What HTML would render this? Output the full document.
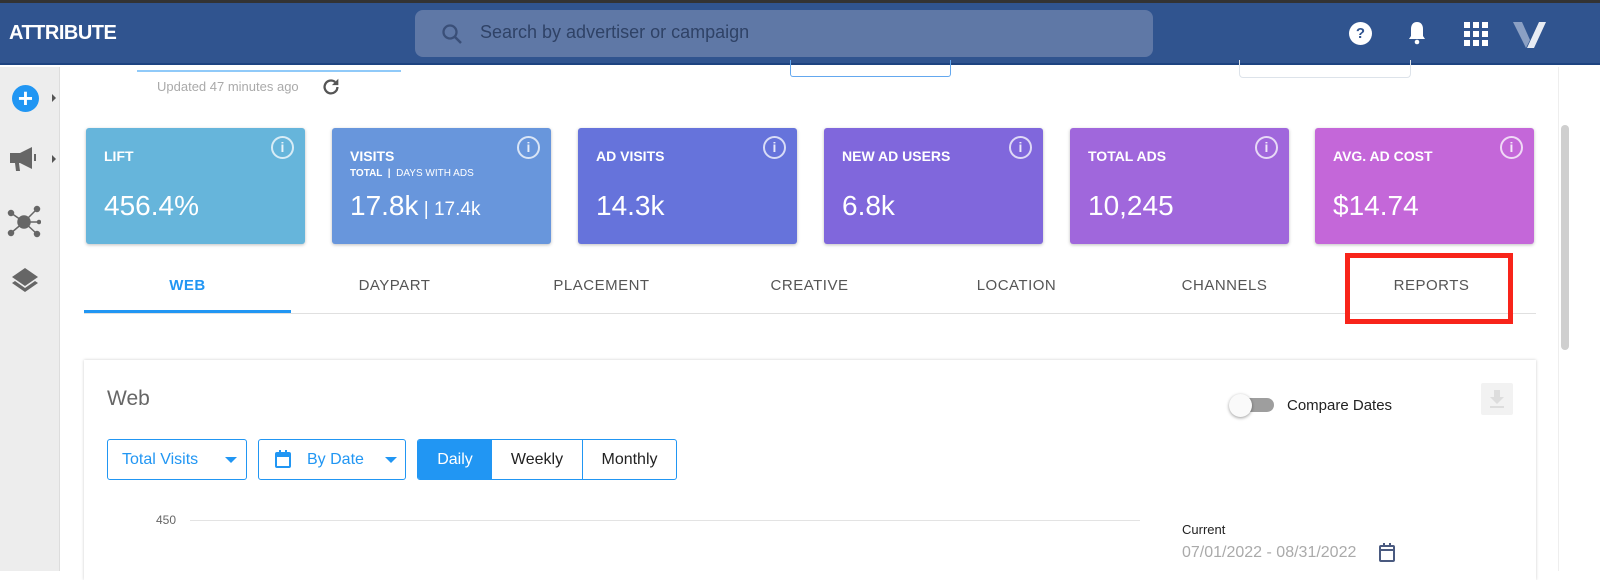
<!DOCTYPE html>
<html><head><style>
*{box-sizing:border-box;margin:0;padding:0}
body{width:1600px;height:571px;overflow:hidden;background:#fff;font-family:"Liberation Sans",sans-serif;position:relative}
.abs{position:absolute}
.card{position:absolute;top:128px;width:219px;height:116px;border-radius:3px;color:#fff;box-shadow:0 1px 3px rgba(0,0,0,.25)}
.card .t{position:absolute;left:18px;top:20px;font-size:14px;font-weight:bold}
.card .v{position:absolute;left:18px;top:62px;font-size:28px}
.card .i{position:absolute;right:11px;top:8px;width:23px;height:23px;border:2px solid rgba(255,255,255,.75);border-radius:50%;font-size:14px;text-align:center;line-height:19px;font-weight:bold;color:rgba(255,255,255,.85)}
.tab{position:absolute;top:277px;font-size:15px;color:#555;letter-spacing:.5px;text-align:center;width:207px}
.btn{position:absolute;top:439px;height:41px;border:1px solid #2196f3;border-radius:3px;font-size:16px;line-height:39px}
</style></head><body>
<div class="abs" style="left:0;top:0;width:1600px;height:3px;background:#333"></div>
<div class="abs" style="left:0;top:3px;width:1600px;height:62px;background:#30548f;border-bottom:2px solid #1d4380"></div>
<div class="abs" style="left:9px;top:22px;color:#fff;font-size:20px;font-weight:bold;letter-spacing:-.5px">ATTRIBUTE</div>
<div class="abs" style="left:415px;top:10px;width:738px;height:47px;background:#5f78a6;border-radius:8px"></div>
<svg class="abs" style="left:440px;top:22px" width="24" height="24" viewBox="0 0 24 24"><circle cx="10" cy="10" r="6.5" fill="none" stroke="#3a4f78" stroke-width="2.3"/><path d="M15 15l6 6" stroke="#3a4f78" stroke-width="2.5"/></svg>
<div class="abs" style="left:480px;top:22px;font-size:18px;color:#2f4266">Search by advertiser or campaign</div>
<div class="abs" style="left:1349px;top:22px;width:23px;height:23px;border-radius:50%;background:#fff;color:#30548f;font-weight:bold;font-size:15px;text-align:center;line-height:23px">?</div>
<svg class="abs" style="left:1407px;top:20px" width="20" height="26" viewBox="0 0 20 26"><path d="M10 2c-4 0-6 3-6 7v7l-2 3h16l-2-3V9c0-4-2-7-6-7z" fill="#fff"/><circle cx="10" cy="22" r="2.3" fill="#fff"/></svg>
<svg class="abs" style="left:1464px;top:22px" width="24" height="24" viewBox="0 0 24 24" fill="#fff"><rect x="0" y="0" width="6" height="6"/><rect x="9" y="0" width="6" height="6"/><rect x="18" y="0" width="6" height="6"/><rect x="0" y="9" width="6" height="6"/><rect x="9" y="9" width="6" height="6"/><rect x="18" y="9" width="6" height="6"/><rect x="0" y="18" width="6" height="6"/><rect x="9" y="18" width="6" height="6"/><rect x="18" y="18" width="6" height="6"/></svg>
<svg class="abs" style="left:1513px;top:20px" width="34" height="30" viewBox="0 0 34 30"><path d="M0 2h9l8 18-4 8z" fill="#8ba0c4"/><path d="M26 2h7l-12 26h-7z" fill="#e8ecf3"/></svg>
<!-- sidebar -->
<div class="abs" style="left:0;top:67px;width:60px;height:504px;background:#ededed;border-right:1px solid #ddd"></div>
<div class="abs" style="left:12px;top:85px;width:27px;height:27px;border-radius:50%;background:#2196f3;color:#fff;font-size:26px;font-weight:bold;text-align:center;line-height:26px">+</div>
<div class="abs" style="left:52px;top:94px;border-left:4px solid #555;border-top:4px solid transparent;border-bottom:4px solid transparent"></div>
<svg class="abs" style="left:10px;top:145px" width="32" height="32" viewBox="0 0 32 32"><rect x="0" y="8" width="10" height="10" fill="#666"/><path d="M10 8l12-6v22l-12-6z" fill="#666"/><rect x="24" y="9" width="2" height="7" fill="#666"/><path d="M5 18h4l1 8h-4z" fill="#666"/></svg>
<div class="abs" style="left:52px;top:155px;border-left:4px solid #555;border-top:4px solid transparent;border-bottom:4px solid transparent"></div>
<svg class="abs" style="left:7px;top:205px" width="34" height="34" viewBox="0 0 34 34" fill="#666" stroke="#666" stroke-width="1.5"><circle cx="17" cy="17" r="6"/><circle cx="4" cy="8" r="2.5"/><circle cx="30" cy="4" r="2.5"/><circle cx="32" cy="17" r="1.5"/><circle cx="4" cy="28" r="2.5"/><circle cx="30" cy="29" r="2.5"/><path d="M4 8L17 17L30 4M17 17L32 17M4 28L17 17L30 29" fill="none"/></svg>
<svg class="abs" style="left:10px;top:268px" width="30" height="32" viewBox="0 0 30 32" fill="#666"><path d="M15 0L28 9L15 18L2 9z"/><path d="M2 15l3-2 10 7 10-7 3 2-13 9z"/></svg>
<!-- top partials -->
<div class="abs" style="left:137px;top:70px;width:264px;height:2px;background:#90caf9"></div>
<div class="abs" style="left:157px;top:79px;font-size:13px;color:#aaa">Updated 47 minutes ago</div>
<svg class="abs" style="left:320px;top:76px" width="22" height="22" viewBox="0 0 24 24"><path d="M19 12a7 7 0 1 1-2.5-5.4" fill="none" stroke="#555" stroke-width="2.5"/><path d="M20 3v7h-7z" fill="#555"/></svg>
<div class="abs" style="left:790px;top:60px;width:161px;height:17px;border:1.5px solid #64a8ef;border-top:none;border-radius:0 0 3px 3px"></div>
<div class="abs" style="left:1239px;top:60px;width:172px;height:18px;border:1px solid #dde3ea;border-top:none;border-radius:0 0 4px 4px"></div>
<!-- cards -->
<div class="card" style="left:86px;background:#66b5db"><div class="t">LIFT</div><div class="v">456.4%</div><div class="i">i</div></div>
<div class="card" style="left:332px;background:#6896dc"><div class="t">VISITS</div><div class="abs" style="left:18px;top:40px;font-size:10px;font-weight:bold">TOTAL &nbsp;| &nbsp;<span style="font-weight:normal">DAYS WITH ADS</span></div><div class="v">17.8k<span style="font-size:19px"> | 17.4k</span></div><div class="i">i</div></div>
<div class="card" style="left:578px;background:#6673db"><div class="t">AD VISITS</div><div class="v">14.3k</div><div class="i">i</div></div>
<div class="card" style="left:824px;background:#8067dc"><div class="t">NEW AD USERS</div><div class="v">6.8k</div><div class="i">i</div></div>
<div class="card" style="left:1070px;background:#a067dc"><div class="t">TOTAL ADS</div><div class="v">10,245</div><div class="i">i</div></div>
<div class="card" style="left:1315px;background:#c467d9"><div class="t">AVG. AD COST</div><div class="v">$14.74</div><div class="i">i</div></div>
<!-- tabs -->
<div class="tab" style="left:84px;color:#2196f3;font-weight:bold">WEB</div>
<div class="tab" style="left:291px">DAYPART</div>
<div class="tab" style="left:498px">PLACEMENT</div>
<div class="tab" style="left:706px">CREATIVE</div>
<div class="tab" style="left:913px">LOCATION</div>
<div class="tab" style="left:1121px">CHANNELS</div>
<div class="tab" style="left:1328px">REPORTS</div>
<div class="abs" style="left:84px;top:313px;width:1452px;height:1px;background:#e0e0e0"></div>
<div class="abs" style="left:84px;top:310px;width:207px;height:3px;background:#2196f3"></div>
<div class="abs" style="left:1345px;top:253px;width:168px;height:71px;border:5px solid #f8241a"></div>
<!-- panel -->
<div class="abs" style="left:84px;top:360px;width:1452px;height:220px;box-shadow:0 0 3px rgba(0,0,0,.2);background:#fff"></div>
<div class="abs" style="left:107px;top:387px;font-size:21px;color:#666">Web</div>
<div class="abs" style="left:1232px;top:398px;width:42px;height:14px;border-radius:7px;background:#9e9e9e"></div>
<div class="abs" style="left:1229px;top:394px;width:23px;height:23px;border-radius:50%;background:#fafafa;box-shadow:0 1px 3px rgba(0,0,0,.4)"></div>
<div class="abs" style="left:1287px;top:397px;font-size:15px;color:#222">Compare Dates</div>
<div class="abs" style="left:1481px;top:383px;width:32px;height:32px;background:#f2f2f2;border-radius:2px"></div>
<svg class="abs" style="left:1487px;top:389px" width="20" height="20" viewBox="0 0 20 20" fill="#ddd"><path d="M7 1h6v7h4l-7 7-7-7h4z"/><rect x="3" y="17" width="14" height="2"/></svg>
<div class="btn" style="left:107px;width:140px;padding-left:14px;color:#2196f3">Total Visits</div>
<div class="abs" style="left:225px;top:457px;border-top:6px solid #2196f3;border-left:6px solid transparent;border-right:6px solid transparent"></div>
<div class="btn" style="left:258px;width:148px;padding-left:48px;color:#2196f3">By Date</div>
<svg class="abs" style="left:274px;top:449px" width="18" height="20" viewBox="0 0 18 20"><rect x="2" y="4" width="14" height="14" rx="1" fill="none" stroke="#2196f3" stroke-width="2"/><rect x="2" y="4" width="14" height="4" fill="#2196f3"/><rect x="5" y="1" width="2" height="4" fill="#2196f3"/><rect x="11" y="1" width="2" height="4" fill="#2196f3"/></svg>
<div class="abs" style="left:385px;top:457px;border-top:6px solid #2196f3;border-left:6px solid transparent;border-right:6px solid transparent"></div>
<div class="btn" style="left:417px;width:260px;overflow:hidden;display:flex;color:#222">
<div style="width:74px;background:#2196f3;color:#fff;text-align:center">Daily</div>
<div style="width:91px;text-align:center;border-right:1px solid #2196f3">Weekly</div>
<div style="flex:1;text-align:center">Monthly</div></div>
<div class="abs" style="left:156px;top:513px;font-size:12px;color:#666">450</div>
<div class="abs" style="left:190px;top:520px;width:950px;height:1px;background:#e3e3e3"></div>
<div class="abs" style="left:1182px;top:522px;font-size:13px;color:#222">Current</div>
<div class="abs" style="left:1182px;top:544px;font-size:16px;color:#aaa">07/01/2022 - 08/31/2022</div>
<svg class="abs" style="left:1378px;top:542px" width="18" height="20" viewBox="0 0 18 20"><rect x="2" y="4" width="14" height="15" rx="1" fill="none" stroke="#4a5a80" stroke-width="2"/><path d="M2 8h14M6 1v4M12 1v4" stroke="#4a5a80" stroke-width="2"/></svg>
<!-- scrollbar -->
<div class="abs" style="left:1558px;top:67px;width:42px;height:504px;background:#fff;border-left:1px solid #eee"></div>
<div class="abs" style="left:1561px;top:125px;width:8px;height:225px;background:#cfcfcf;border-radius:4px"></div>
</body></html>
